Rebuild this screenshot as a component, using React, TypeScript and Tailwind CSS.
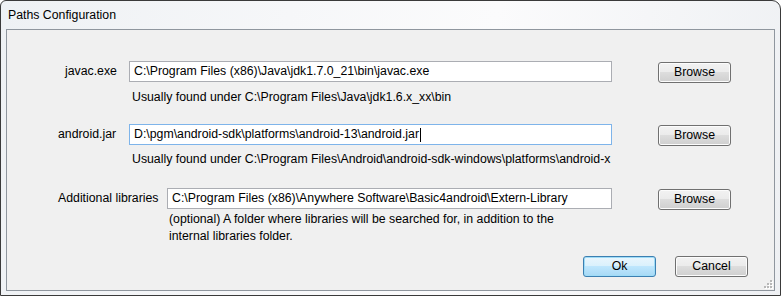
const font = { fontFamily: '"Liberation Sans", Arial, sans-serif' };

function Browse({ label = "Browse", isDefault = false }: { label?: string; isDefault?: boolean }) {
  return (
    <button
      className={`h-[21px] w-[73px] rounded-[3px] border text-[12.3px] leading-[19px] text-black ${
        isDefault
          ? "border-[#3c7fb1] bg-[linear-gradient(#eaf6fd_0%,#d9f0fc_50%,#bee6fd_50%,#a7d9f5_100%)] shadow-[inset_0_0_0_1px_#9fdcf7]"
          : "border-[#707070] bg-[linear-gradient(#f2f2f2_0%,#ebebeb_50%,#dddddd_50%,#cfcfcf_100%)] shadow-[inset_0_0_0_1px_#fcfcfc]"
      }`}
    >
      {label}
    </button>
  );
}

function PathInput({ value, width, focused = false }: { value: string; width: string; focused?: boolean }) {
  return (
    <div
      className={`flex h-[21px] items-center border bg-white pl-[4px] text-black ${width} ${
        focused ? "border-[#7eb4ea]" : "border-[#abadb3]"
      }`}
    >
      <span className="whitespace-nowrap">{value}</span>
      {focused && <span className="ml-px h-[14px] w-px bg-black" />}
    </div>
  );
}

export default function App() {
  return (
    <div className="h-[297px] w-[781px] bg-white" style={font}>
      <div className="flex h-[296px] w-[781px] flex-col rounded-tl-[6px] rounded-tr-[9px] border border-[#3a3a3a] bg-[linear-gradient(100deg,#eef1f4_0%,#f6f7f9_35%,#fbfbfc_60%,#eef0f3_100%)] px-[5px] pb-[4px]">
        <div className="flex h-[28px] items-center pl-[2px] text-[12.3px] text-black">Paths Configuration</div>
        <div className="relative flex-1 border border-[#8f969e] bg-[#f0f0f0] text-[12.3px] text-black">
          {/* javac.exe */}
          <div className="mt-[31px] flex h-[21px] items-start">
            <span className="ml-[58px] w-[60px] leading-[21px]">javac.exe</span>
            <div className="ml-[4px]">
              <PathInput value="C:\Program Files (x86)\Java\jdk1.7.0_21\bin\javac.exe" width="w-[483px]" />
            </div>
            <div className="ml-[46px] mt-px">
              <Browse />
            </div>
          </div>
          <div className="ml-[125px] mt-[8px] leading-[15px]">Usually found under C:\Program Files\Java\jdk1.6.x_xx\bin</div>

          {/* android.jar */}
          <div className="mt-[19px] flex h-[21px] items-start">
            <span className="ml-[51px] w-[67px] leading-[21px]">android.jar</span>
            <div className="ml-[4px]">
              <PathInput value="D:\pgm\android-sdk\platforms\android-13\android.jar" width="w-[483px]" focused />
            </div>
            <div className="ml-[46px] mt-px">
              <Browse />
            </div>
          </div>
          <div className="ml-[125px] mt-[7px] leading-[15px]">
            Usually found under C:\Program Files\Android\android-sdk-windows\platforms\android-x
          </div>

          {/* Additional libraries */}
          <div className="mt-[21px] flex h-[21px] items-start">
            <span className="ml-[51px] w-[105px] leading-[21px]">Additional libraries</span>
            <div className="ml-[4px]">
              <PathInput
                value="C:\Program Files (x86)\Anywhere Software\Basic4android\Extern-Library"
                width="w-[445px]"
              />
            </div>
            <div className="ml-[46px] mt-px">
              <Browse />
            </div>
          </div>
          <div className="ml-[162px] mt-[2px] leading-[17px]">
            (optional) A folder where libraries will be searched for, in addition to the
            <br />
            internal libraries folder.
          </div>

          {/* Ok / Cancel */}
          <div className="mt-[11px] flex h-[21px]">
            <div className="ml-[576px]">
              <Browse label="Ok" isDefault />
            </div>
            <div className="ml-[19px]">
              <Browse label="Cancel" />
            </div>
          </div>

          {/* size grip */}
          <svg className="absolute bottom-[1px] right-[1px]" width="10" height="10" viewBox="0 0 10 10">
            {[
              [7, 1],
              [4, 4],
              [7, 4],
              [1, 7],
              [4, 7],
              [7, 7],
            ].map(([x, y], i) => (
              <g key={i}>
                <rect x={x + 1} y={y + 1} width="2" height="2" fill="#ffffff" />
                <rect x={x} y={y} width="2" height="2" fill="#b8b8b8" />
              </g>
            ))}
          </svg>
        </div>
      </div>
    </div>
  );
}
